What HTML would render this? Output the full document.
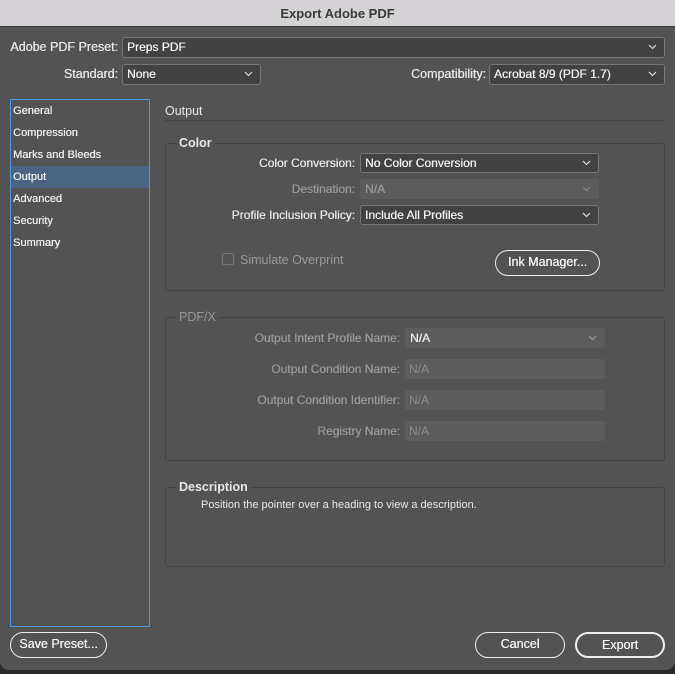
<!DOCTYPE html>
<html><head><style>
*{box-sizing:border-box;margin:0;padding:0}
body{width:675px;height:674px;background:#2a2a2a;font-family:"Liberation Sans",sans-serif;position:relative;overflow:hidden;color:#e8e8e8;font-size:12px}
#dlg{position:absolute;left:0;top:0;width:675px;height:670px;background:#535353;border-radius:0 0 9px 9px;overflow:hidden}
#title{position:absolute;left:0;top:0;width:675px;height:27px;background:#d5d2d5;border-bottom:1px solid #3a3a3a;text-align:center;line-height:27px;font-weight:bold;font-size:13px;color:#3a3a3a}
.a{position:absolute;white-space:nowrap}
.lbl{position:absolute;text-align:right;white-space:nowrap;line-height:20px;text-shadow:0.3px 0 0 currentColor}
.dd{position:absolute;background:#424242;border:1px solid #777;border-radius:3px;padding-left:4px;line-height:18px;color:#f2f2f2;text-shadow:0.3px 0 0 currentColor}
.dd.dis{background:#5c5c5c;border-color:#5c5c5c;color:#9a9a9a}
.dd svg{position:absolute;right:7px;top:6px}
.fld{position:absolute;background:#5c5c5c;border-radius:2px;color:#8e8e8e;padding-left:4px;line-height:20px}
.grp{position:absolute;border:1px solid #444;border-radius:3px}
.leg{position:absolute;background:#535353;padding:0 3px;line-height:14px}
.btn{position:absolute;border:1.5px solid #eee;border-radius:14px;text-align:center;color:#f5f5f5;line-height:23px;font-size:12.5px;text-shadow:0.3px 0 0 currentColor}
.dim{color:#9a9a9a}
#list{position:absolute;left:10px;top:99px;width:140px;height:528px;border:1px solid #4a9be8;background:#535353}
#list div{height:22px;line-height:22px;padding-left:2px;font-size:11px;color:#eee;text-shadow:0.3px 0 0 currentColor}
</style></head><body>
<div id="dlg">
<div id="title">Export Adobe PDF</div>

<div class="lbl" style="left:0;width:118px;top:37px;font-size:12.5px">Adobe PDF Preset:</div>
<div class="dd" style="left:122px;top:37px;width:543px;height:21px">Preps PDF<svg width="9" height="6"><path d="M1 1L4.5 4.5L8 1" stroke="#ddd" fill="none" stroke-width="1.2"/></svg></div>
<div class="lbl" style="left:0;width:118px;top:64px;font-size:12.5px">Standard:</div>
<div class="dd" style="left:122px;top:64px;width:139px;height:21px">None<svg width="9" height="6"><path d="M1 1L4.5 4.5L8 1" stroke="#ddd" fill="none" stroke-width="1.2"/></svg></div>
<div class="lbl" style="left:300px;width:186px;top:64px;font-size:12.5px">Compatibility:</div>
<div class="dd" style="left:489px;top:64px;width:176px;height:21px">Acrobat 8/9 (PDF 1.7)<svg width="9" height="6"><path d="M1 1L4.5 4.5L8 1" stroke="#ddd" fill="none" stroke-width="1.2"/></svg></div>

<div id="list">
<div>General</div><div>Compression</div><div>Marks and Bleeds</div>
<div style="background:#4b6481">Output</div><div>Advanced</div><div>Security</div><div>Summary</div>
</div>

<div class="a" style="left:165px;top:104px;font-size:12.5px">Output</div>
<div class="a" style="left:165px;top:120px;width:500px;height:1px;background:#454545"></div>

<div class="grp" style="left:165px;top:143px;width:500px;height:148px"></div>
<div class="leg" style="left:176px;top:136px;font-weight:bold;font-size:12.5px">Color</div>
<div class="lbl" style="left:170px;width:185px;top:153px">Color Conversion:</div>
<div class="dd" style="left:360px;top:153px;width:239px;height:20px">No Color Conversion<svg width="9" height="6"><path d="M1 1L4.5 4.5L8 1" stroke="#ddd" fill="none" stroke-width="1.2"/></svg></div>
<div class="lbl dim" style="left:170px;width:185px;top:179px">Destination:</div>
<div class="dd dis" style="left:360px;top:179px;width:239px;height:20px">N/A<svg width="9" height="6"><path d="M1 1L4.5 4.5L8 1" stroke="#888" fill="none" stroke-width="1.2"/></svg></div>
<div class="lbl" style="left:170px;width:185px;top:205px">Profile Inclusion Policy:</div>
<div class="dd" style="left:360px;top:205px;width:239px;height:20px">Include All Profiles<svg width="9" height="6"><path d="M1 1L4.5 4.5L8 1" stroke="#ddd" fill="none" stroke-width="1.2"/></svg></div>
<div class="a" style="left:222px;top:253px;width:12px;height:12px;border:1px solid #777;border-radius:2px"></div>
<div class="a dim" style="left:240px;top:253px;font-size:12.5px">Simulate Overprint</div>
<div class="btn" style="left:495px;top:250px;width:105px;height:26px">Ink Manager...</div>

<div class="grp" style="left:165px;top:317px;width:500px;height:144px"></div>
<div class="leg dim" style="left:176px;top:310px;font-size:12.5px">PDF/X</div>
<div class="lbl dim" style="left:170px;width:230px;top:328px">Output Intent Profile Name:</div>
<div class="dd dis" style="left:405px;top:328px;width:200px;height:20px;color:#eee">N/A<svg width="9" height="6"><path d="M1 1L4.5 4.5L8 1" stroke="#999" fill="none" stroke-width="1.2"/></svg></div>
<div class="lbl dim" style="left:170px;width:230px;top:359px">Output Condition Name:</div>
<div class="fld" style="left:405px;top:359px;width:200px;height:20px">N/A</div>
<div class="lbl dim" style="left:170px;width:230px;top:390px">Output Condition Identifier:</div>
<div class="fld" style="left:405px;top:390px;width:200px;height:20px">N/A</div>
<div class="lbl dim" style="left:170px;width:230px;top:421px">Registry Name:</div>
<div class="fld" style="left:405px;top:421px;width:200px;height:20px">N/A</div>

<div class="grp" style="left:165px;top:487px;width:500px;height:80px"></div>
<div class="leg" style="left:176px;top:480px;font-weight:bold;font-size:12.5px">Description</div>
<div class="a" style="left:201px;top:499px;font-size:11px">Position the pointer over a heading to view a description.</div>

<div class="btn" style="left:10px;top:632px;width:97px;height:26px">Save Preset...</div>
<div class="btn" style="left:475px;top:632px;width:90px;height:26px">Cancel</div>
<div class="btn" style="left:575px;top:632px;width:90px;height:26px;border-width:2px">Export</div>
</div>
</body></html>
